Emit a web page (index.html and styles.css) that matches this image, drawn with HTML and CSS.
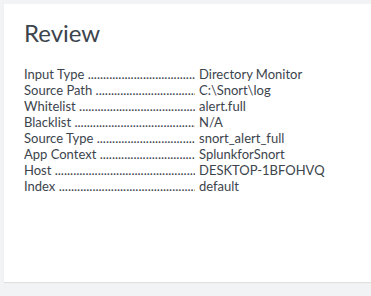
FILE: index.html
```html
<!doctype html>
<html lang="en">
  <head>
    <meta charset="UTF-8" />
    <title>Review</title>
    <link rel="stylesheet" href="styles.css">
  </head>
  <body>
    <div class="review-card">
      <h2 class="review-title">Review</h2>

      <div class="review-list">
        <div class="review-row">
          <span class="review-label">Input Type</span>
          <span class="review-value">Directory Monitor</span>
        </div>
        <div class="review-row">
          <span class="review-label">Source Path</span>
          <span class="review-value">C:\Snort\log</span>
        </div>
        <div class="review-row">
          <span class="review-label">Whitelist</span>
          <span class="review-value">alert.full</span>
        </div>
        <div class="review-row">
          <span class="review-label">Blacklist</span>
          <span class="review-value">N/A</span>
        </div>
        <div class="review-row">
          <span class="review-label">Source Type</span>
          <span class="review-value">snort_alert_full</span>
        </div>
        <div class="review-row">
          <span class="review-label">App Context</span>
          <span class="review-value">SplunkforSnort</span>
        </div>
        <div class="review-row">
          <span class="review-label">Host</span>
          <span class="review-value">DESKTOP-1BFOHVQ</span>
        </div>
        <div class="review-row">
          <span class="review-label">Index</span>
          <span class="review-value">default</span>
        </div>
      </div>
    </div>
  </body>
</html>
```

FILE: styles.css
```css
/* Review step */
body {
  font-family: Lato, 'Liberation Sans', Arial, sans-serif;
  background: #f2f3f4;
  color: #3c444d;
  margin: 0;
  padding: 4px 0 14px 4px;
}

.review-card {
  background: #fff;
  height: 278px;
  padding: 15px 20px;
  box-sizing: border-box;
  box-shadow: 0 1px 1px rgba(0, 0, 0, 0.08);
}

.review-title {
  font-size: 24px;
  font-weight: normal;
  margin: 0 0 19px 0;
  line-height: 28px;
}

.review-row {
  display: flex;
  font-size: 13px;
  line-height: 16px;
}

.review-label {
  width: 171px;
  overflow: hidden;
  white-space: nowrap;
  flex: none;
}

.review-label::after {
  content: " ..................................................................................";
}

.review-value {
  margin-left: 4px;
  white-space: nowrap;
}
```
